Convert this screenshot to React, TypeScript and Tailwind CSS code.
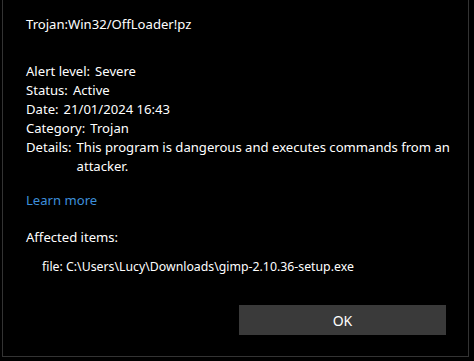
export default function App() {
  const rows = [
    { label: "Alert level:", value: "Severe" },
    { label: "Status:", value: "Active" },
    { label: "Date:", value: "21/01/2024 16:43" },
    { label: "Category:", value: "Trojan" },
    { label: "Details:", value: "This program is dangerous and executes commands from an attacker." },
  ]

  return (
    <div className="w-[474px] h-[361px] bg-black overflow-hidden" style={{ fontFamily: '"Noto Sans", "Open Sans", sans-serif' }}>
      <div className="ml-[2px] w-[467px] h-[357px] border-x border-b border-[#333333] flex flex-col text-white text-[13.1px] leading-[19px]">
        <div className="pl-[23px] pt-[15px]">Trojan:Win32/OffLoader!pz</div>

        <div className="pl-[23px] pr-[10px] mt-[28px] flex flex-col">
          {rows.map(r => (
            <div key={r.label} className="flex">
              <span className="shrink-0 mr-[5px]">{r.label}</span>
              <span className="flex-1">{r.value}</span>
            </div>
          ))}
        </div>

        <a className="pl-[23px] mt-[15px] text-[#3d8fdb]">Learn more</a>

        <div className="pl-[23px] mt-[18px]">Affected items:</div>
        <div className="pl-[39px] mt-[10px] text-[12.3px]">file: C:\Users\Lucy\Downloads\gimp-2.10.36-setup.exe</div>

        <div className="flex justify-end mt-auto mb-[21px] mr-[22px]">
          <button className="w-[207px] h-[30px] bg-[#3a3a3a] text-white text-[14px]">OK</button>
        </div>
      </div>
    </div>
  )
}
